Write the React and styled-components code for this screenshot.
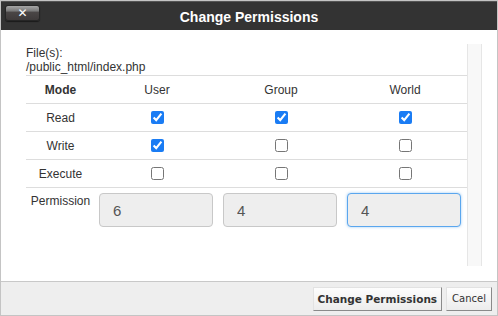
import React from 'react';
import styled, { createGlobalStyle, css } from 'styled-components';

const GlobalStyle = createGlobalStyle`
  html, body {
    margin: 0;
    padding: 0;
    background: #fff;
  }
  * {
    box-sizing: border-box;
  }
`;

const Dialog = styled.div`
  width: 498px;
  height: 316px;
  display: flex;
  flex-direction: column;
  border: 1px solid #c4c4c4;
  font-family: 'Liberation Sans', Arial, sans-serif;
  color: #333;
`;

const TitleBar = styled.div`
  height: 29px;
  flex: none;
  display: grid;
  grid-template-columns: 1fr auto 1fr;
  align-items: center;
  background: #333;
  border-top: 1px solid #555;
`;

const CloseButton = styled.button`
  justify-self: start;
  align-self: start;
  margin: 3px 0 0 4px;
  width: 35px;
  height: 16px;
  padding: 0;
  border: 1px solid #262626;
  border-radius: 3px;
  background: linear-gradient(#a6a6a6 0%, #7a7a7a 35%, #4a4646 45%, #3e3a3a 100%);
  box-shadow: 0 1px 1px rgba(0, 0, 0, 0.5);
  color: #fff;
  font: bold 12px/14px 'DejaVu Sans', sans-serif;
  text-align: center;
`;

const Title = styled.div`
  font-size: 14px;
  font-weight: bold;
  color: #fff;
  line-height: 16px;
  margin-top: 1px;
`;

const Body = styled.div`
  flex: 1;
  padding: 14px 15px 15px 25px;
  display: flex;
  background: #fff;
`;

const Content = styled.div`
  flex: 1;
  font-size: 12px;
`;

const Track = styled.div`
  width: 15px;
  flex: none;
  background: #f8f8f8;
  border-left: 1px solid #e6e6e6;
  border-right: 1px solid #e6e6e6;
`;

const FileBlock = styled.div`
  padding-top: 2px;
  margin-bottom: 1px;
  line-height: 14px;
`;

const Row = styled.div`
  display: grid;
  grid-template-columns: 69px repeat(3, 1fr);
  height: ${(p) => (p.tall ? 'auto' : '28px')};
  border-top: 1px solid #ddd;
  align-items: ${(p) => (p.tall ? 'start' : 'center')};
`;

const Cell = styled.div`
  text-align: center;
  font-weight: ${(p) => (p.bold ? 'bold' : 'normal')};
  line-height: 14px;
  display: flex;
  justify-content: center;
`;

const PermLabel = styled.div`
  text-align: center;
  line-height: 14px;
  padding-top: 6px;
`;

const InputCell = styled.div`
  padding: 5px 6px 0 4px;
`;

const Check = styled.input.attrs({ type: 'checkbox' })`
  margin: 0;
  width: 13px;
  height: 13px;
  accent-color: #1a7cf4;
`;

const focused = css`
  border-color: #5aa6ee;
  box-shadow: 0 0 3px rgba(90, 166, 238, 0.6);
`;

const PermInput = styled.input`
  width: 100%;
  height: 34px;
  padding: 0 0 0 13px;
  background: #eee;
  border: 1px solid #c8c8c8;
  border-radius: 4px;
  font-family: 'Liberation Sans', Arial, sans-serif;
  font-size: 15px;
  color: #555;
  outline: none;
  ${(p) => p.active && focused}
`;

const Footer = styled.div`
  height: 34px;
  flex: none;
  border-top: 1px solid #c8c8c8;
  background: #eee;
  display: flex;
  justify-content: flex-end;
  align-items: center;
  gap: 4px;
  padding: 0 5px;
`;

const Button = styled.button`
  height: 24px;
  padding: 0 ${(p) => (p.primary ? '4px' : '5px')};
  font-family: 'DejaVu Sans', Verdana, sans-serif;
  font-size: ${(p) => (p.primary ? '10.5px' : '10px')};
  font-weight: ${(p) => (p.primary ? 'bold' : 'normal')};
  color: #333;
  background: linear-gradient(#fdfdfd, #ececec);
  border: 1px solid;
  border-color: #e2e2e2 #8a8a8a #8a8a8a #e2e2e2;
  border-radius: 0;
`;

const modes = [
  { name: 'Read', values: [true, true, true] },
  { name: 'Write', values: [true, false, false] },
  { name: 'Execute', values: [false, false, false] },
];

const App = () => (
  <>
    <GlobalStyle />
    <Dialog>
      <TitleBar>
        <CloseButton>✕</CloseButton>
        <Title>Change Permissions</Title>
        <div />
      </TitleBar>
      <Body>
        <Content>
          <FileBlock>
            File(s):
            <br />
            /public_html/index.php
          </FileBlock>
          <Row>
            <Cell bold>Mode</Cell>
            <Cell>User</Cell>
            <Cell>Group</Cell>
            <Cell>World</Cell>
          </Row>
          {modes.map((m) => (
            <Row key={m.name}>
              <Cell>{m.name}</Cell>
              {m.values.map((v, i) => (
                <Cell key={i}>
                  <Check defaultChecked={v} />
                </Cell>
              ))}
            </Row>
          ))}
          <Row tall>
            <PermLabel>Permission</PermLabel>
            <InputCell>
              <PermInput defaultValue="6" />
            </InputCell>
            <InputCell>
              <PermInput defaultValue="4" />
            </InputCell>
            <InputCell>
              <PermInput defaultValue="4" active />
            </InputCell>
          </Row>
        </Content>
        <Track />
      </Body>
      <Footer>
        <Button primary>Change Permissions</Button>
        <Button>Cancel</Button>
      </Footer>
    </Dialog>
  </>
);

export default App;
